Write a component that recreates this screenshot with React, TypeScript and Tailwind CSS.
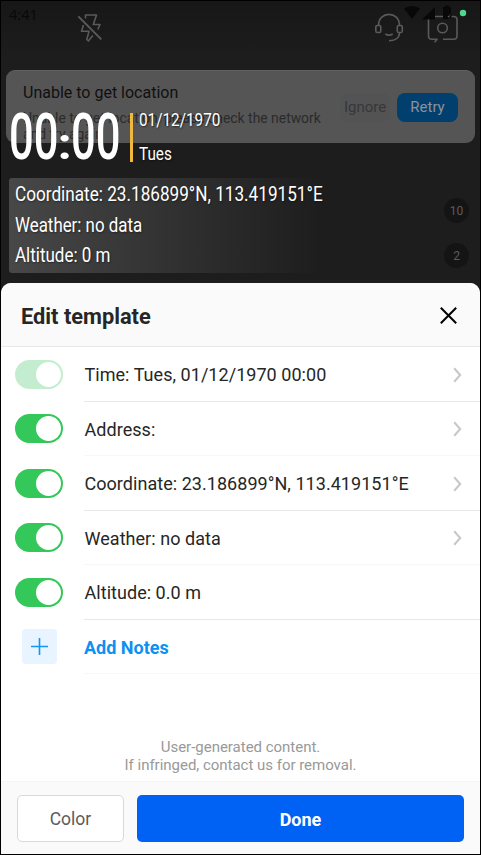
import React from "react";

interface RowProps {
  label: string;
  muted?: boolean;
  arrow?: boolean;
  line: string;
}

const Toggle: React.FC<{ muted?: boolean }> = ({ muted }) => (
  <div className={`w-12 h-[29px] rounded-full flex items-center justify-end pr-[2px] shrink-0 ${muted ? "bg-[#c4edcf]" : "bg-[#34c759]"}`}>
    <div className="w-[25px] h-[25px] rounded-full bg-white" />
  </div>
);

const Row: React.FC<RowProps> = ({ label, muted, arrow, line }) => (
  <div className="h-[54.5px] pl-[14px] flex items-center">
    <Toggle muted={muted} />
    <div className={`ml-[21px] flex-1 h-full border-b flex items-center justify-between pr-[18px] pt-[1.5px] ${line}`}>
      <span className="pl-[0.5px] text-[18px] tracking-[0.04px] text-[#262626] whitespace-nowrap">{label}</span>
      {arrow && (
        <svg width="9" height="16" viewBox="0 0 9 16" fill="none" stroke="#c8c8c8" strokeWidth="2.1">
          <path d="M1.2 1.2L7.2 8L1.2 14.8" />
        </svg>
      )}
    </div>
  </div>
);

const Toast: React.FC = () => (
  <div className="absolute left-[5px] top-[69px] w-[469px] h-[73px] rounded-[9px] bg-[#555555] border-t border-[#606060] pl-[17px] pr-[17px] flex items-center justify-between">
    <div className="w-[310px] h-full pt-[12px]">
      <div className="text-[16px] leading-[20px] text-[#101010] whitespace-nowrap">Unable to get location</div>
      <div className="mt-[7px] text-[13.9px] leading-[16px] text-[#2b2b2b] whitespace-nowrap">
        Unable to get location, please check the network
        <br />
        and try again
      </div>
    </div>
    <div className="flex gap-[7px] text-[15px]">
      <div className="w-[50px] h-[29px] rounded-lg bg-[#535354] text-[#37373a] flex items-center justify-center">Ignore</div>
      <div className="w-[61px] h-[29px] rounded-lg bg-[#003f6e] text-[#8b9299] flex items-center justify-center">Retry</div>
    </div>
  </div>
);

const StatusIcons: React.FC = () => (
  <svg className="absolute left-0 top-0" width="479" height="52" viewBox="1 1 479 52" fill="none">
    <g stroke="#5a5a5a" strokeWidth="1.6">
      <path d="M85.5 18.5V15H96.5L93.3 24.5H100L97.8 29.5M83.5 25L81.5 31.2H89L86.8 39.5L88.4 41L92.8 35.5" strokeLinejoin="round" />
      <path d="M78.3 16.3L101.3 39.3" strokeWidth="1.9" />
      <path d="M378.5 25.5C378.5 10.7 399.5 10.7 399.5 25.5" />
      <rect x="375.8" y="25.5" width="5" height="7" rx="1.5" />
      <rect x="397.3" y="25.5" width="5" height="7" rx="1.5" />
      <path d="M385.3 34Q389 36.3 392.7 34" />
      <path d="M399.5 32.5C399.5 38 395 40.8 389 40.8" />
      <path d="M437.5 39.3H432Q428.5 39.3 428.5 36V19.5Q428.5 16.5 432 16.5H453.5Q457 16.5 457 19.5V36Q457 39.3 453.5 39.3H443M437.5 39L434.5 42.3" />
      <circle cx="442.5" cy="28" r="4.8" />
    </g>
    <g fill="#080808">
      <path d="M404 8.5Q411.8 3.5 420 8.5L412 19Z" />
      <path d="M435 7V19.5H422Z" />
      <path d="M443 7H445V5.5H449V7H451V13L447.5 16.5L449 19H443Z" />
      <path d="M449 17L452 14L451 19Z" />
    </g>
    <circle cx="463" cy="13" r="3.2" fill="#4fd98b" />
  </svg>
);

const Watermark: React.FC = () => (
  <div className="absolute left-[8px] top-[108px] text-white">
    <div className="flex">
      <div className="w-[121px] h-[54px]">
        <div className="w-max text-[65px] leading-[56px] font-medium origin-left scale-x-[0.67]">
          00<span className="inline-block mx-[3px] text-[45px] font-bold leading-none scale-x-[1.7]">:</span>00
        </div>
      </div>
      <div className="w-[3px] h-[49px] mt-[4px] bg-[#f0b83c]" />
      <div className="ml-[6px] h-[54px] text-[18px] leading-[34px] [text-shadow:1px_1px_2px_#0008]">
        <div className="w-max -mt-[6px] origin-left scale-x-[0.85]">01/12/1970</div>
        <div className="w-max origin-left scale-x-[0.85]">Tues</div>
      </div>
    </div>
    <div className="w-[314px] h-[95px] mt-[15px] rounded-[3px] pl-[6px] pt-[1px] bg-linear-to-r from-[#484848] to-[#1d1d1d] text-[20px] leading-[30.5px] [text-shadow:1px_1px_2px_#0006]">
      <div className="w-max origin-left scale-x-[0.858]">Coordinate: 23.186899°N, 113.419151°E</div>
      <div className="w-max origin-left scale-x-[0.844]">Weather: no data</div>
      <div className="w-max origin-left scale-x-[0.85]">Altitude: 0 m</div>
    </div>
  </div>
);

const App: React.FC = () => {
  return (
    <div className="w-[481px] h-[855px] border border-black bg-[#1d1d1d] font-['Roboto',sans-serif] overflow-hidden flex flex-col">
      <div className="relative h-[282px] shrink-0 bg-linear-to-b from-[#171717] to-[#1d1d1d] to-20%">
        <div className="absolute left-[8px] top-[5px] text-[14.5px] leading-[16px] text-[#090909] font-['Noto_Sans',sans-serif]">4:41</div>
        <StatusIcons />
        <Toast />
        <Watermark />
        <div className="absolute right-[11px] top-[197px] flex flex-col gap-5 text-[12px] text-[#5c5c5c]">
          <div className="w-[25px] h-[25px] rounded-full bg-[#141414] flex items-center justify-center">10</div>
          <div className="w-[25px] h-[25px] rounded-full bg-[#141414] flex items-center justify-center">2</div>
        </div>
      </div>

      <div className="flex-1 rounded-t-[10px] bg-white overflow-hidden flex flex-col">
        <div className="h-[64px] shrink-0 bg-[#fafafa] border-b border-[#e9e9e9] pl-[20px] pr-[23px] flex items-center justify-between">
          <h2 className="mt-[5px] text-[21.8px] font-bold text-[#262626]">Edit template</h2>
          <svg className="mt-[2px]" width="17" height="17" viewBox="0 0 17 17" fill="none" stroke="#000" strokeWidth="2">
            <path d="M0.8 0.8L16.2 16.2M16.2 0.8L0.8 16.2" />
          </svg>
        </div>

        <Row label="Time: Tues, 01/12/1970 00:00" muted arrow line="border-[#e8e8e8]" />
        <Row label="Address:" arrow line="border-[#f7f7f7]" />
        <Row label="Coordinate: 23.186899°N, 113.419151°E" arrow line="border-[#e8e8e8]" />
        <Row label="Weather: no data" arrow line="border-[#f7f7f7]" />
        <Row label="Altitude: 0.0 m" line="border-[#e8e8e8]" />
        <div className="h-[54.5px] pl-[21px] flex items-center">
          <div className="w-[35px] h-[35px] rounded bg-[#e8f4ff] flex items-center justify-center">
            <svg width="17" height="17" viewBox="0 0 17 17" stroke="#1495f5" strokeWidth="1.6">
              <path d="M8.5 0V17M0 8.5H17" />
            </svg>
          </div>
          <div className="ml-[27px] flex-1 h-full pt-[1.5px] border-b border-[#f7f7f7] flex items-center text-[18px] font-bold text-[#0d90f2]">Add Notes</div>
        </div>

        <div className="flex-1 flex flex-col justify-end pb-[7px] text-center text-[15px] leading-[17.5px] tracking-[-0.02px] text-[#999999]">
          <p>User-generated content.</p>
          <p>If infringed, contact us for removal.</p>
        </div>

        <div className="h-[73px] shrink-0 bg-[#fafafa] border-t border-[#f5f5f5] px-4 pt-[13px] flex gap-[13px]">
          <button className="w-[107px] h-[47px] pt-[1px] rounded-[5px] border border-[#d9d9d9] bg-white text-[17.5px] text-[#5c5c5c]">Color</button>
          <button className="flex-1 h-[47px] pt-[1px] rounded-[5px] bg-[#0061f5] text-[18px] font-bold text-white">Done</button>
        </div>
      </div>
    </div>
  );
};

export default App;
